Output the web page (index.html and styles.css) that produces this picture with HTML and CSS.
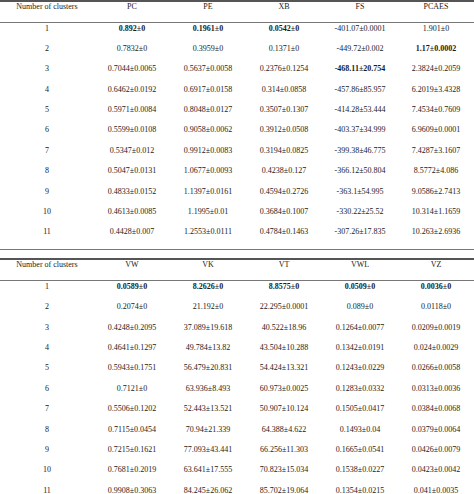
FILE: index.html
```html
<!DOCTYPE html>
<html>
<head>
<meta charset="utf-8">
<link rel="stylesheet" href="styles.css">
</head>
<body>
<div class="tbl first">
  <div class="row head"><div>Number of clusters</div><div>PC</div><div>PE</div><div>XB</div><div>FS</div><div>PCAES</div></div>
  <div class="row"><div>1</div><div class="b">0.892±0</div><div class="b">0.1961±0</div><div class="b">0.0542±0</div><div>-401.07±0.0001</div><div>1.901±0</div></div>
  <div class="row"><div>2</div><div>0.7832±0</div><div>0.3959±0</div><div>0.1371±0</div><div>-449.72±0.002</div><div class="b">1.17±0.0002</div></div>
  <div class="row"><div>3</div><div>0.7044±0.0065</div><div>0.5637±0.0058</div><div>0.2376±0.1254</div><div class="b">-468.11±20.754</div><div>2.3824±0.2059</div></div>
  <div class="row"><div>4</div><div>0.6462±0.0192</div><div>0.6917±0.0158</div><div>0.314±0.0858</div><div>-457.86±85.957</div><div>6.2019±3.4328</div></div>
  <div class="row"><div>5</div><div>0.5971±0.0084</div><div>0.8048±0.0127</div><div>0.3507±0.1307</div><div>-414.28±53.444</div><div>7.4534±0.7609</div></div>
  <div class="row"><div>6</div><div>0.5599±0.0108</div><div>0.9058±0.0062</div><div>0.3912±0.0508</div><div>-403.37±34.999</div><div>6.9609±0.0001</div></div>
  <div class="row"><div>7</div><div>0.5347±0.012</div><div>0.9912±0.0083</div><div>0.3194±0.0825</div><div>-399.38±46.775</div><div>7.4287±3.1607</div></div>
  <div class="row"><div>8</div><div>0.5047±0.0131</div><div>1.0677±0.0093</div><div>0.4238±0.127</div><div>-366.12±50.804</div><div>8.5772±4.086</div></div>
  <div class="row"><div>9</div><div>0.4833±0.0152</div><div>1.1397±0.0161</div><div>0.4594±0.2726</div><div>-363.1±54.995</div><div>9.0586±2.7413</div></div>
  <div class="row"><div>10</div><div>0.4613±0.0085</div><div>1.1995±0.01</div><div>0.3684±0.1007</div><div>-330.22±25.52</div><div>10.314±1.1659</div></div>
  <div class="row"><div>11</div><div>0.4428±0.007</div><div>1.2553±0.0111</div><div>0.4784±0.1463</div><div>-307.26±17.835</div><div>10.263±2.6936</div></div>
</div>
<div class="tbl second">
  <div class="row head"><div>Number of clusters</div><div>VW</div><div>VK</div><div>VT</div><div>VWL</div><div>VZ</div></div>
  <div class="row"><div>1</div><div class="b">0.0589±0</div><div class="b">8.2626±0</div><div class="b">8.8575±0</div><div class="b">0.0509±0</div><div class="b">0.0036±0</div></div>
  <div class="row"><div>2</div><div>0.2074±0</div><div>21.192±0</div><div>22.295±0.0001</div><div>0.089±0</div><div>0.0118±0</div></div>
  <div class="row"><div>3</div><div>0.4248±0.2095</div><div>37.089±19.618</div><div>40.522±18.96</div><div>0.1264±0.0077</div><div>0.0209±0.0019</div></div>
  <div class="row"><div>4</div><div>0.4641±0.1297</div><div>49.784±13.82</div><div>43.504±10.288</div><div>0.1342±0.0191</div><div>0.024±0.0029</div></div>
  <div class="row"><div>5</div><div>0.5943±0.1751</div><div>56.479±20.831</div><div>54.424±13.321</div><div>0.1243±0.0229</div><div>0.0266±0.0058</div></div>
  <div class="row"><div>6</div><div>0.7121±0</div><div>63.936±8.493</div><div>60.973±0.0025</div><div>0.1283±0.0332</div><div>0.0313±0.0036</div></div>
  <div class="row"><div>7</div><div>0.5506±0.1202</div><div>52.443±13.521</div><div>50.907±10.124</div><div>0.1505±0.0417</div><div>0.0384±0.0068</div></div>
  <div class="row"><div>8</div><div>0.7115±0.0454</div><div>70.94±21.339</div><div>64.388±4.622</div><div>0.1493±0.04</div><div>0.0379±0.0064</div></div>
  <div class="row"><div>9</div><div>0.7215±0.1621</div><div>77.093±43.441</div><div>66.256±11.303</div><div>0.1665±0.0541</div><div>0.0426±0.0079</div></div>
  <div class="row"><div>10</div><div>0.7681±0.2019</div><div>63.641±17.555</div><div>70.823±15.034</div><div>0.1538±0.0227</div><div>0.0423±0.0042</div></div>
  <div class="row"><div>11</div><div>0.9908±0.3063</div><div>84.245±26.062</div><div>85.702±19.064</div><div>0.1354±0.0215</div><div>0.041±0.0035</div></div>
</div>
</body>
</html>
```

FILE: styles.css
```css
html, body {
  margin: 0;
  padding: 0;
  background: #fff;
  overflow: hidden;
}
body {
  width: 474px;
  font-family: "Liberation Serif", "Times New Roman", serif;
  font-size: 8px;
  line-height: 9px;
  color: #1a1a1a;
}
.tbl {
  border-top: 2px solid #555;
  border-bottom: 1.5px solid #777;
  padding-bottom: 2px;
}
.second {
  margin-top: 8px;
}
.row {
  display: grid;
  grid-template-columns: 94px repeat(5, 76px);
  height: 20.4px;
  box-sizing: border-box;
  padding-top: 0.5px;
}
.row > div {
  text-align: center;
  white-space: nowrap;
}
.row.head {
  height: 21px;
  padding-top: 0;
  border-bottom: 1.5px solid #777;
}
.b {
  font-weight: bold;
}
```
